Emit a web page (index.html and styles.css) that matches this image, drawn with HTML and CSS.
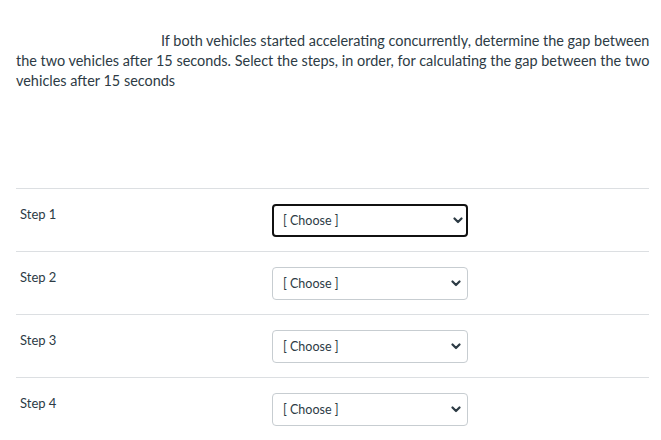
FILE: index.html
```html
<!DOCTYPE html>
<html lang="en">
<head>
  <meta charset="UTF-8" />
  <title>Question</title>
  <link rel="stylesheet" href="styles.css">
</head>
<body>
  <div class="question">
    <p class="question-text">If both vehicles started accelerating concurrently, determine the gap between the two vehicles after 15 seconds. Select the steps, in order, for calculating the gap between the two vehicles after 15 seconds</p>

    <div class="answers">
      <div class="answer-row">
        <div class="step-label">Step 1</div>
        <div class="select-wrap focused">
          <select class="step-select"><option>[ Choose ]</option></select>
          <svg class="chevron" width="10" height="7" viewBox="0 0 10 7"><path d="M1.5 1.5 L5 5 L8.5 1.5" fill="none" stroke="#2d3b45" stroke-width="2.2" stroke-linecap="round" stroke-linejoin="round"/></svg>
        </div>
      </div>
      <div class="answer-row">
        <div class="step-label">Step 2</div>
        <div class="select-wrap">
          <select class="step-select"><option>[ Choose ]</option></select>
          <svg class="chevron" width="10" height="7" viewBox="0 0 10 7"><path d="M1.5 1.5 L5 5 L8.5 1.5" fill="none" stroke="#2d3b45" stroke-width="2.2" stroke-linecap="round" stroke-linejoin="round"/></svg>
        </div>
      </div>
      <div class="answer-row">
        <div class="step-label">Step 3</div>
        <div class="select-wrap">
          <select class="step-select"><option>[ Choose ]</option></select>
          <svg class="chevron" width="10" height="7" viewBox="0 0 10 7"><path d="M1.5 1.5 L5 5 L8.5 1.5" fill="none" stroke="#2d3b45" stroke-width="2.2" stroke-linecap="round" stroke-linejoin="round"/></svg>
        </div>
      </div>
      <div class="answer-row">
        <div class="step-label">Step 4</div>
        <div class="select-wrap">
          <select class="step-select"><option>[ Choose ]</option></select>
          <svg class="chevron" width="10" height="7" viewBox="0 0 10 7"><path d="M1.5 1.5 L5 5 L8.5 1.5" fill="none" stroke="#2d3b45" stroke-width="2.2" stroke-linecap="round" stroke-linejoin="round"/></svg>
        </div>
      </div>
    </div>
  </div>
</body>
</html>
```

FILE: styles.css
```css
body {
  margin: 0;
  background: #fff;
  font-family: Lato, 'Noto Sans', sans-serif;
  color: #2d3b45;
}

.question {
  padding: 0 12px 0 16px;
}

.question-text {
  margin: 31px -10px 97px 0;
  font-size: 14.45px;
  line-height: 20px;
  text-indent: 145px;
}

.answer-row {
  display: flex;
  align-items: flex-start;
  border-top: 1px solid #dcdfe2;
  padding: 15px 0 14px;
}

.step-label {
  width: 256px;
  padding: 2px 0 0 4px;
  box-sizing: border-box;
  font-size: 13px;
  line-height: 16px;
}

/* select box with custom chevron */
.select-wrap {
  position: relative;
  width: 196px;
  height: 33px;
}

.step-select {
  appearance: none;
  -webkit-appearance: none;
  width: 100%;
  height: 100%;
  box-sizing: border-box;
  border: 1px solid #c7cdd1;
  border-radius: 4px;
  background: #fff;
  padding: 0 24px 0 10px;
  font-family: Lato, 'Noto Sans', sans-serif;
  font-size: 12.5px;
  color: #2d3b45;
}

.focused .step-select {
  border: 2px solid #111;
  padding-left: 9px;
}

.chevron {
  position: absolute;
  right: 7px;
  top: 13px;
}

.focused .chevron {
  right: 5px;
}
```
